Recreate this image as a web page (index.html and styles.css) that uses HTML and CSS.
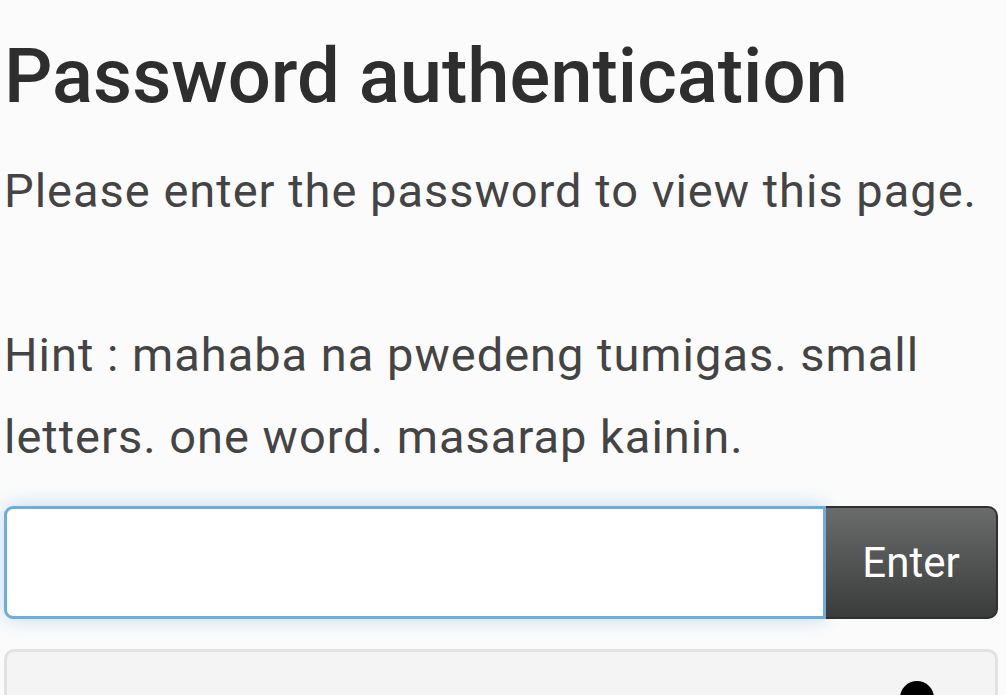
FILE: index.html
```html
<!DOCTYPE html>
<html>
<head>
<meta charset="utf-8">
<link rel="stylesheet" href="styles.css">
</head>
<body>
<main class="page">
  <h1 class="title">Password authentication</h1>
  <p class="text">Please enter the password to view this page.<br><br>Hint : mahaba na pwedeng tumigas. small letters. one word. masarap kainin.</p>
  <form class="form">
    <input class="field" type="password">
    <button class="btn" type="button">Enter</button>
  </form>
  <div class="box"><span class="dot"></span></div>
</main>
</body>
</html>
```
FILE: styles.css
```css
html, body {
  margin: 0;
  padding: 0;
  background: #fbfbfb;
  overflow: hidden;
}
.page {
  padding: 0 8px 0 4px;
  font-family: Roboto, "Liberation Sans", sans-serif;
}
.title {
  margin: 0;
  padding-top: 32px;
  font-size: 76px;
  line-height: 88px;
  font-weight: 500;
  letter-spacing: 0;
  color: #2e2e2e;
}
.text {
  margin: 30px 0 0;
  font-size: 47px;
  line-height: 82px;
  letter-spacing: 1px;
  color: #444;
}
.form {
  display: flex;
  margin-top: 28px;
  height: 113px;
}
.field {
  flex: 1;
  box-sizing: border-box;
  margin: 0;
  height: 113px;
  border: 3px solid #6cade0;
  border-radius: 9px 0 0 9px;
  background: #fff;
  box-shadow: 0 0 20px rgba(108, 173, 224, 0.4);
  outline: none;
}
.btn {
  box-sizing: border-box;
  width: 172px;
  height: 113px;
  margin: 0;
  border: 2px solid #2f3131;
  border-left: none;
  border-radius: 0 10px 10px 0;
  background: linear-gradient(#6a6c6c, #3a3c3c);
  color: #fff;
  font-family: Roboto, "Liberation Sans", sans-serif;
  font-size: 42px;
  padding: 0;
}
.box {
  position: relative;
  box-sizing: border-box;
  margin-top: 30px;
  height: 120px;
  border: 3px solid #e2e2e2;
  border-radius: 10px;
  background: #f4f4f4;
}
.dot {
  position: absolute;
  left: 893px;
  top: 29px;
  width: 34px;
  height: 34px;
  border-radius: 50%;
  background: #000;
}
```
